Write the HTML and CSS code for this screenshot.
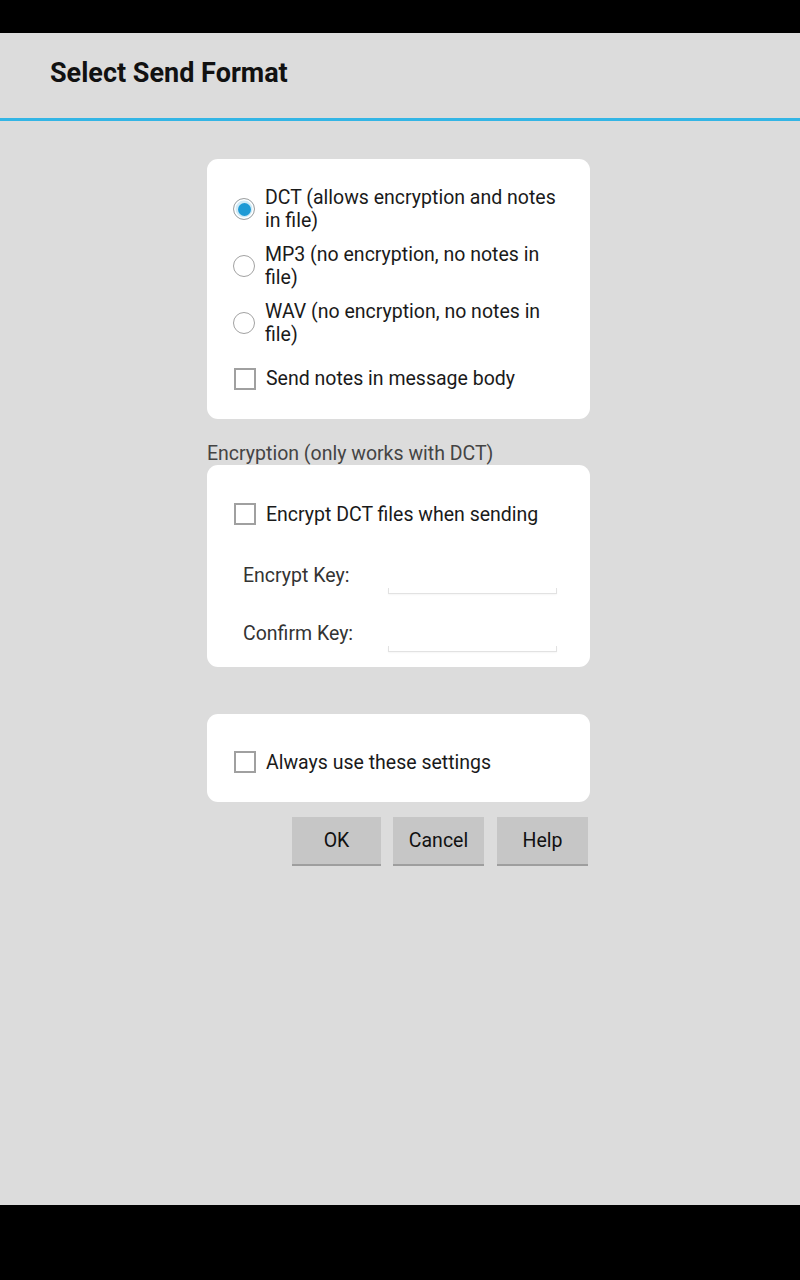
FILE: index.html
```html
<!DOCTYPE html>
<html>
<head>
<meta charset="utf-8">
<link rel="stylesheet" href="styles.css">
</head>
<body>
<div class="screen">
  <div class="statusbar"></div>
  <div class="titlebar"><h1 class="title">Select Send Format</h1></div>
  <main class="content">
    <section class="card card-format">
      <div class="option">
        <span class="radio radio-on"><span class="dot"></span></span>
        <span class="label">DCT (allows encryption and notes in file)</span>
      </div>
      <div class="option">
        <span class="radio"></span>
        <span class="label">MP3 (no encryption, no notes in file)</span>
      </div>
      <div class="option">
        <span class="radio"></span>
        <span class="label">WAV (no encryption, no notes in file)</span>
      </div>
      <div class="option option-check">
        <span class="check"></span>
        <span class="label">Send notes in message body</span>
      </div>
    </section>

    <div class="section-label">Encryption (only works with DCT)</div>
    <section class="card card-enc">
      <div class="option option-single">
        <span class="check"></span>
        <span class="label">Encrypt DCT files when sending</span>
      </div>
      <div class="field">
        <span class="field-label">Encrypt Key:</span>
        <span class="input"></span>
      </div>
      <div class="field">
        <span class="field-label">Confirm Key:</span>
        <span class="input"></span>
      </div>
    </section>

    <section class="card card-always">
      <div class="option option-single">
        <span class="check"></span>
        <span class="label">Always use these settings</span>
      </div>
    </section>

    <div class="buttons">
      <button class="btn btn-ok">OK</button>
      <button class="btn btn-cancel">Cancel</button>
      <button class="btn btn-help">Help</button>
    </div>
  </main>
  <div class="navbar"></div>
</div>
</body>
</html>
```

FILE: styles.css
```css
html, body {
  margin: 0;
  padding: 0;
}
body {
  font-family: Roboto, "Liberation Sans", sans-serif;
  color: #1a1a1a;
  background: #dcdcdc;
}
.screen {
  width: 800px;
  height: 1280px;
  display: flex;
  flex-direction: column;
  background: #dcdcdc;
}
.statusbar {
  height: 33px;
  background: #000;
  flex: none;
}
.titlebar {
  height: 85px;
  border-bottom: 3px solid #33b5e5;
  display: flex;
  align-items: center;
  padding-left: 50px;
  flex: none;
}
.title {
  margin: 0;
  font-size: 27px;
  font-weight: 700;
  color: #111;
  padding-bottom: 5px;
}
.content {
  flex: 1;
  padding: 38px 0 0 207px;
  display: flex;
  flex-direction: column;
  width: 383px;
}
.card {
  background: #fff;
  border-radius: 11px;
}
.card-format {
  padding: 27px 26px 29px 26px;
  display: flex;
  flex-direction: column;
  gap: 11px;
}
.option {
  display: flex;
  align-items: center;
  gap: 10px;
}
.label {
  font-size: 19.5px;
  line-height: 23px;
  color: #1a1a1a;
  max-width: 298px;
}
.option-check {
  margin-top: 10px;
}
.radio {
  flex: none;
  width: 20px;
  height: 20px;
  border-radius: 50%;
  border: 1.5px solid #a2a2a2;
  display: flex;
  align-items: center;
  justify-content: center;
}
.radio-on {
  border-color: #a0a0a0;
  background: #cfeaf6;
  box-shadow: inset 0 0 0 1.5px #fff;
}
.dot {
  width: 13px;
  height: 13px;
  border-radius: 50%;
  background: #1d9ad5;
}
.check {
  flex: none;
  width: 18px;
  height: 18px;
  margin: 0 0 0 1px;
  border: 2px solid #a0a0a0;
  background: #fff;
}
.section-label {
  font-size: 19.5px;
  line-height: 22px;
  color: #444;
  margin-top: 24px;
}
.card-enc {
  padding: 25px 33px 5px 26px;
  display: flex;
  flex-direction: column;
}
.option-single {
  height: 48px;
}
.field {
  display: flex;
  align-items: center;
  justify-content: space-between;
  height: 58px;
  padding-left: 10px;
}
.card-enc .option-single + .field {
  margin-top: 8px;
}
.field-label {
  font-size: 19.5px;
  color: #333;
}
.input {
  width: 167px;
  height: 5px;
  margin-top: 32px;
  border: 1.5px solid #e2e2e2;
  border-top: none;
  box-shadow: 0 1px 2px rgba(0,0,0,0.04);
}
.card-always {
  margin-top: 47px;
  padding: 24px 26px 16px 26px;
}
.buttons {
  display: flex;
  justify-content: flex-end;
  gap: 12px;
  margin-top: 15px;
  padding-right: 2px;
}
.btn {
  height: 49px;
  border: none;
  border-bottom: 2px solid #9e9e9e;
  background: #c6c6c6;
  font-family: Roboto, "Liberation Sans", sans-serif;
  font-size: 19.5px;
  color: #111;
  padding: 0;
}
.btn-ok { width: 89px; }
.btn-cancel { width: 91px; }
.btn-help { width: 91px; margin-left: 1px; }
.navbar {
  height: 75px;
  background: #000;
  flex: none;
}
```
